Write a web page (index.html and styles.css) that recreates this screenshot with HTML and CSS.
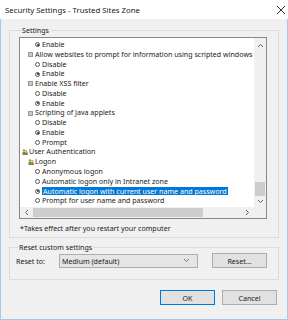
FILE: index.html
```html
<!DOCTYPE html>
<html>
  <head>
    <link rel="stylesheet" href="styles.css">
  </head>
  <body>
    <div class="window">
      <div class="titlebar">
        <p class="title">Security Settings - Trusted Sites Zone</p>
        <svg class="close" width="10" height="10" viewBox="0 0 10 10">
          <path d="M1 1L9 9M9 1L1 9" stroke="#333" stroke-width="1"></path>
        </svg>
      </div>
      <div class="dialog">
        <fieldset class="group settings">
          <legend>Settings</legend>
          <div class="listbox">
            <div class="list-area">
              <div class="rows">
                <div class="item lv2"><span class="radio on"></span>Enable</div>
                <div class="item lv1"><span class="opt"></span>Allow websites to prompt for information using scripted windows</div>
                <div class="item lv2"><span class="radio"></span>Disable</div>
                <div class="item lv2"><span class="radio on"></span>Enable</div>
                <div class="item lv1"><span class="opt"></span>Enable XSS filter</div>
                <div class="item lv2"><span class="radio"></span>Disable</div>
                <div class="item lv2"><span class="radio on"></span>Enable</div>
                <div class="item lv1"><span class="opt"></span>Scripting of Java applets</div>
                <div class="item lv2"><span class="radio"></span>Disable</div>
                <div class="item lv2"><span class="radio on"></span>Enable</div>
                <div class="item lv2"><span class="radio"></span>Prompt</div>
                <div class="item lv0">
                  <svg class="users" width="6" height="6" viewBox="0 0 6 6">
                    <circle cx="2" cy="1.5" r="1.2" fill="#b08a3c"></circle>
                    <rect x="0.5" y="3" width="3" height="3" fill="#6e8f3a"></rect>
                    <circle cx="4.3" cy="2" r="1" fill="#c9a24a"></circle>
                    <rect x="3.3" y="3.4" width="2.4" height="2.6" fill="#8a6d3b"></rect>
                  </svg>User Authentication
                </div>
                <div class="item lv1">
                  <svg class="users" width="6" height="6" viewBox="0 0 6 6">
                    <circle cx="2" cy="1.5" r="1.2" fill="#b08a3c"></circle>
                    <rect x="0.5" y="3" width="3" height="3" fill="#6e8f3a"></rect>
                    <circle cx="4.3" cy="2" r="1" fill="#c9a24a"></circle>
                    <rect x="3.3" y="3.4" width="2.4" height="2.6" fill="#8a6d3b"></rect>
                  </svg>Logon
                </div>
                <div class="item lv2"><span class="radio"></span>Anonymous logon</div>
                <div class="item lv2"><span class="radio"></span>Automatic logon only in Intranet zone</div>
                <div class="item lv2"><span class="radio on"></span><span class="selected">Automatic logon with current user name and password</span></div>
                <div class="item lv2"><span class="radio"></span>Prompt for user name and password</div>
              </div>
              <div class="vscroll">
                <svg class="arrow" width="7" height="5" viewBox="0 0 7 5"><path d="M1 4L3.5 1.5L6 4" fill="none" stroke="#606060"></path></svg>
                <div class="grow"></div>
                <div class="vthumb"></div>
                <svg class="arrow" width="7" height="5" viewBox="0 0 7 5"><path d="M1 1L3.5 3.5L6 1" fill="none" stroke="#606060"></path></svg>
              </div>
            </div>
            <div class="hscroll">
              <svg class="arrow" width="5" height="7" viewBox="0 0 5 7"><path d="M4 1L1.5 3.5L4 6" fill="none" stroke="#606060"></path></svg>
              <div class="hthumb"></div>
              <div class="grow"></div>
              <svg class="arrow" width="5" height="7" viewBox="0 0 5 7"><path d="M1 1L3.5 3.5L1 6" fill="none" stroke="#606060"></path></svg>
              <div class="corner"></div>
            </div>
          </div>
          <p class="note">*Takes effect after you restart your computer</p>
        </fieldset>
        <fieldset class="group reset">
          <legend>Reset custom settings</legend>
          <div class="reset-row">
            <span class="reset-label">Reset to:</span>
            <div class="select">
              <span>Medium (default)</span>
              <svg width="7" height="5" viewBox="0 0 7 5"><path d="M1 1L3.5 3.5L6 1" fill="none" stroke="#777"></path></svg>
            </div>
            <div class="button reset-btn">Reset...</div>
          </div>
        </fieldset>
        <div class="buttons">
          <div class="button default">OK</div>
          <div class="button">Cancel</div>
        </div>
      </div>
    </div>
  </body>
</html>
```

FILE: styles.css
```css
* {
  margin: 0;
  padding: 0;
  box-sizing: border-box;
}

body {
  width: 288px;
  height: 320px;
  font-family: "Segoe UI", "Noto Sans", sans-serif;
  font-size: 7.1px;
  color: #1a1a1a;
  background: #fff;
  overflow: hidden;
}

.window {
  display: flex;
  flex-direction: column;
  height: 320px;
}

.titlebar {
  height: 19px;
  display: flex;
  flex-direction: row;
  align-items: center;
  padding: 0 2px 0 5px;
  background: #fff;
}
.title {
  font-size: 7.8px;
  color: #222;
  flex-grow: 1;
}

.dialog {
  flex-grow: 1;
  background: #f0f0f0;
  border: 1px solid #a7c7e7;
  border-top: none;
  padding: 6px 8px 0 8px;
  display: flex;
  flex-direction: column;
}

.group {
  min-width: 0;
  border: 1px solid #dcdcdc;
  padding: 0 11px 0 9px;
}
.group legend {
  padding: 0 1px;
  margin-left: 2px;
  line-height: 10px;
}

.settings {
  height: 213px;
}

.listbox {
  margin-top: 2px;
  height: 182px;
  border: 1px solid #828790;
  background: #fff;
  display: flex;
  flex-direction: column;
}
.list-area {
  flex-grow: 1;
  display: flex;
  flex-direction: row;
  min-height: 0;
}
.rows {
  flex-grow: 1;
  min-width: 0;
  padding-top: 2px;
  overflow: hidden;
}
.item {
  height: 9.75px;
  line-height: 9.75px;
  display: flex;
  align-items: center;
  white-space: nowrap;
}
.lv0 { padding-left: 2px; }
.lv1 { padding-left: 8px; }
.lv2 { padding-left: 15px; }

.radio {
  width: 5px;
  height: 5px;
  border: 1px solid #555;
  border-radius: 50%;
  margin-right: 2px;
  display: flex;
  align-items: center;
  justify-content: center;
  flex-shrink: 0;
}
.radio.on::after {
  content: "";
  width: 2px;
  height: 2px;
  border-radius: 50%;
  background: #222;
}
.opt {
  width: 5px;
  height: 5px;
  margin-right: 2px;
  background: #c8c8c8;
  border: 1px solid #999;
  flex-shrink: 0;
}
.users {
  margin-right: 1px;
  flex-shrink: 0;
}
.selected {
  background: #0078d7;
  color: #fff;
  padding: 0 1px;
  line-height: 8.5px;
}

.vscroll {
  width: 12px;
  flex-shrink: 0;
  background: #f0f0f0;
  display: flex;
  flex-direction: column;
  align-items: center;
  padding: 5px 0 3px 0;
}
.vthumb {
  width: 10px;
  height: 14px;
  background: #cdcdcd;
  margin-bottom: 3px;
}
.hscroll {
  height: 11px;
  background: #f0f0f0;
  display: flex;
  flex-direction: row;
  align-items: center;
  padding-left: 4px;
}
.hthumb {
  width: 170px;
  height: 9px;
  background: #cdcdcd;
  margin-left: 4px;
}
.corner {
  width: 12px;
  height: 11px;
  margin-left: 4px;
  background: #f0f0f0;
}

.grow {
  flex-grow: 1;
}

.note {
  padding: 4px 0 0 1px;
  line-height: 10px;
}

.reset {
  margin-top: 4px;
  height: 38px;
  padding: 0 11px 0 6px;
}
.reset-row {
  display: flex;
  flex-direction: row;
  align-items: center;
  margin-top: 1px;
}
.reset-label {
  width: 43px;
}
.select {
  width: 139px;
  height: 14px;
  border: 1px solid #adadad;
  background: #e5e5e5;
  display: flex;
  flex-direction: row;
  align-items: center;
  justify-content: space-between;
  padding: 0 7px 0 2px;
}

.button {
  width: 55px;
  height: 15px;
  border: 1px solid #adadad;
  background: #e1e1e1;
  display: flex;
  align-items: center;
  justify-content: center;
}
.reset-btn {
  margin-left: 14px;
}
.default {
  border-color: #0078d7;
}

.buttons {
  display: flex;
  flex-direction: row;
  justify-content: flex-end;
  gap: 7px;
  padding: 10px 2px 0 0;
}
```
